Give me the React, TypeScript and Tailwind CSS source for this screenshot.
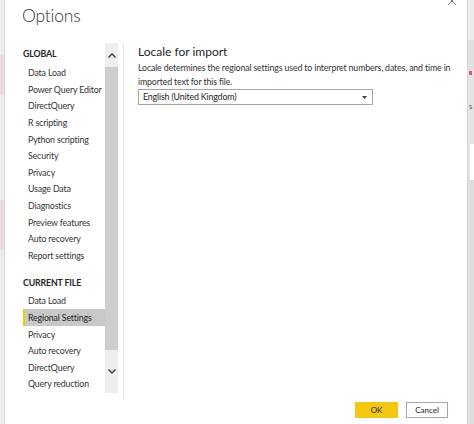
import React from "react";

const globalItems = [
  "Data Load",
  "Power Query Editor",
  "DirectQuery",
  "R scripting",
  "Python scripting",
  "Security",
  "Privacy",
  "Usage Data",
  "Diagnostics",
  "Preview features",
  "Auto recovery",
  "Report settings",
];

const fileItems = [
  "Data Load",
  "Regional Settings",
  "Privacy",
  "Auto recovery",
  "DirectQuery",
  "Query reduction",
];

function NavItem({ label, selected }: { label: string; selected?: boolean }) {
  return (
    <div
      className={
        selected
          ? "h-[16.6px] flex items-center whitespace-nowrap pl-[3px] border-l-2 border-[#f2c811] bg-[#c8c8c8] text-[#252525]"
          : "h-[16.6px] flex items-center whitespace-nowrap pl-[5px] text-[#333333]"
      }
    >
      {label}
    </div>
  );
}

export default function App() {
  return (
    <div
      className="w-[474px] h-[424px] flex bg-white overflow-hidden"
      style={{ fontFamily: 'Lato, "Open Sans", sans-serif' }}
    >
      {/* left background strip */}
      <div className="w-[4px] h-full flex flex-col bg-[#ececec]">
        <div className="h-[55px]" />
        <div className="h-[40px] bg-[#ead9de]" />
        <div className="h-[105px]" />
        <div className="h-[50px] bg-[#eadade]" />
        <div className="flex-1" />
      </div>

      {/* dialog */}
      <div className="relative flex-1 h-full flex flex-col bg-white border-l border-[#dcdcdc]">
        {/* close */}
        <svg className="absolute right-[10px] top-[-4px]" width="10" height="10" viewBox="0 0 10 10">
          <path d="M1 1 L9 9 M9 1 L1 9" stroke="#777" strokeWidth="1" />
        </svg>

        <div className="pl-[17px] pt-[2px] h-[43px] text-[17.5px] tracking-[-0.2px] font-light text-[#333333] leading-[28px]">
          Options
        </div>

        <div className="flex h-[357px]">
          {/* nav */}
          <div className="w-[82px] ml-[18px] text-[8.8px] tracking-[-0.15px]">
            <div className="h-[3px]" />
            <div className="h-[16px] flex items-center font-bold text-[#252525]">GLOBAL</div>
            <div className="h-[2.5px]" />
            {globalItems.map((t) => (
              <NavItem key={"g" + t} label={t} />
            ))}
            <div className="h-[11.3px]" />
            <div className="h-[16px] flex items-center font-bold text-[#252525]">CURRENT FILE</div>
            <div className="h-[1.7px]" />
            {fileItems.map((t) => (
              <NavItem key={"f" + t} label={t} selected={t === "Regional Settings"} />
            ))}
          </div>

          {/* scrollbar */}
          <div className="w-[13px] h-[350px] bg-[#eeeeee] flex flex-col">
            <div className="h-[24px] flex items-center justify-center">
              <svg width="8" height="5" viewBox="0 0 8 5">
                <path d="M0.5 4.5 L4 1 L7.5 4.5" stroke="#333" strokeWidth="1.3" fill="none" />
              </svg>
            </div>
            <div className="h-[283px] bg-[#cdcdcd]" />
            <div className="h-[43px] flex items-center justify-center">
              <svg width="8" height="5" viewBox="0 0 8 5">
                <path d="M0.5 0.5 L4 4 L7.5 0.5" stroke="#333" strokeWidth="1.3" fill="none" />
              </svg>
            </div>
          </div>

          {/* divider */}
          <div className="w-[1px] h-[357px] ml-[5px] bg-[#e6e6e6]" />

          {/* content */}
          <div className="flex-1 pl-[14px]">
            <div className="text-[12px] text-[#252525] leading-[18px] h-[18px]">Locale for import</div>
            <div className="text-[8.8px] tracking-[-0.15px] text-[#333333] leading-[14px] w-[320px]">
              Locale determines the regional settings used to interpret numbers, dates, and time in imported text for this file.
            </div>
            <div className="w-[235px] h-[16px] border border-[#a6a6a6] flex items-center justify-between pl-[4px] pr-[5px] text-[8.8px] tracking-[-0.15px] text-[#252525]">
              <span>English (United Kingdom)</span>
              <svg width="5" height="3" viewBox="0 0 5 3">
                <path d="M0 0 L5 0 L2.5 3 Z" fill="#444" />
              </svg>
            </div>
          </div>
        </div>

        {/* footer */}
        <div className="flex-1 flex items-start justify-end pr-[19px] pt-[2px] gap-[8px] text-[8px]">
          <div className="w-[43px] h-[16px] bg-[#f2c811] flex items-center justify-center text-[#252525]">OK</div>
          <div className="w-[42px] h-[16px] bg-white border border-[#a6a6a6] flex items-center justify-center text-[#252525]">
            Cancel
          </div>
        </div>
      </div>

      {/* right background strip */}
      <div className="w-[7px] h-full flex flex-col bg-[#e4e4e4] border-l border-[#d8d8d8]">
        <div className="h-[40px] bg-[#ececec]" />
        <div className="h-[30px] bg-[#e0e0e0]" />
        <div className="h-[6px] flex items-center">
          <div className="w-[3px] h-[4px] bg-[#e25073] ml-[1px]" />
        </div>
        <div className="h-[24px]" />
        <div className="h-[12px] text-[8px] leading-[12px] text-[#555] pl-[1px]">s</div>
        <div className="h-[32px]" />
        <div className="h-[36px] bg-white w-[4px] ml-[2px]" />
        <div className="flex-1 bg-[#dedede]" />
      </div>
    </div>
  );
}
